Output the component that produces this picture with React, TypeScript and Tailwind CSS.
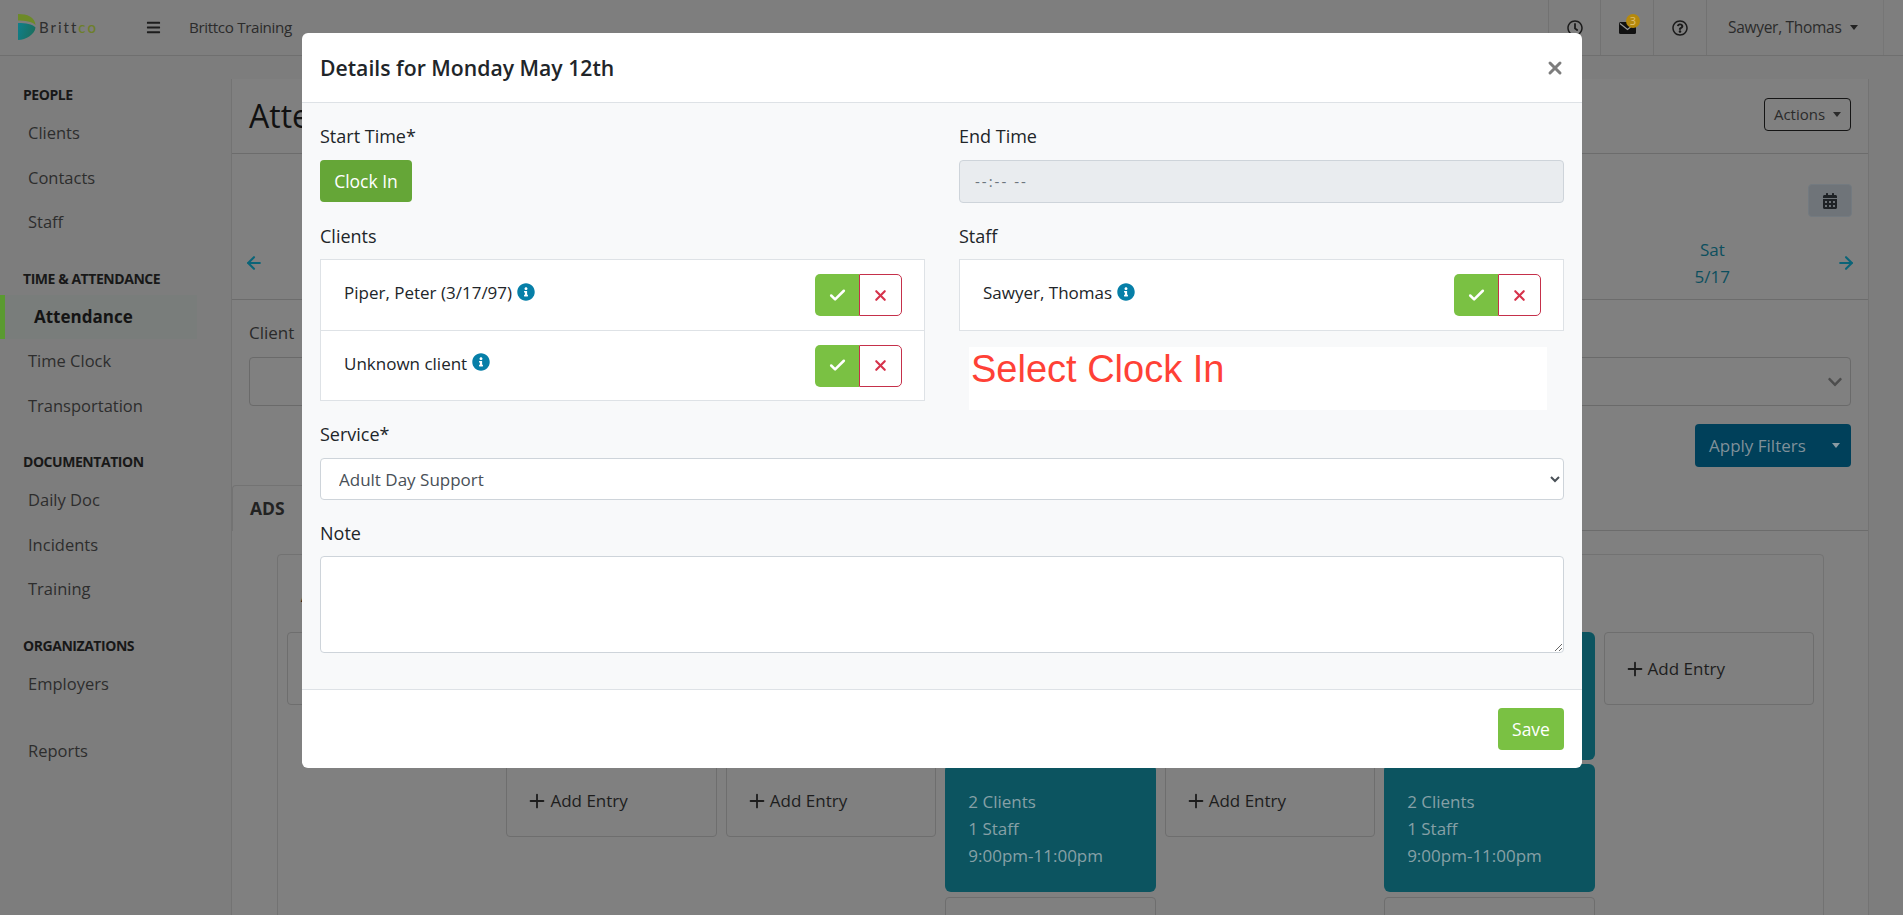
import { ArrowLeft, ArrowRight, Check, Plus, X } from "lucide-react"
import {
  FaBars,
  FaCalendarAlt,
  FaChevronDown,
  FaInfoCircle,
  FaRegClock,
  FaRegQuestionCircle,
} from "react-icons/fa"

const sections = [
  { title: "PEOPLE", items: ["Clients", "Contacts", "Staff"] },
  { title: "TIME & ATTENDANCE", items: ["Attendance", "Time Clock", "Transportation"] },
  { title: "DOCUMENTATION", items: ["Daily Doc", "Incidents", "Training"] },
  { title: "ORGANIZATIONS", items: ["Employers"] },
]

function Logo() {
  return (
    <svg width="18" height="27" viewBox="0 0 18 27" className="shrink-0">
      <defs>
        <linearGradient id="logoTeal" x1="0" y1="0" x2="1" y2="0.3">
          <stop offset="0" stopColor="#0f7f8c" />
          <stop offset="1" stopColor="#1a6f5f" />
        </linearGradient>
      </defs>
      <path d="M0 0C9 0 17 3 17.5 11C14 7.500 7 6.500 0 6.500Z" fill="#6d8a28" />
      <path d="M0 9C8 9 14 10 17.500 13.500C17 20 8 26 0 26Z" fill="url(#logoTeal)" />
    </svg>
  )
}

function Envelope() {
  return (
    <svg width="17" height="12" viewBox="0 0 17 12">
      <rect width="17" height="12" rx="1.500" fill="#111" />
      <path d="M1 1.500L8.500 7.500L16 1.500" fill="none" stroke="#9a9a9a" strokeWidth="1.200" />
    </svg>
  )
}

function AddEntry() {
  return (
    <div className="flex h-[73px] items-center gap-[2px] rounded border border-[#6e6e6e] pl-[19px] text-[#1d1d1d]">
      <Plus className="h-[22px] w-[22px]" strokeWidth={2} />
      <span>Add Entry</span>
    </div>
  )
}

function Visit() {
  return (
    <div className="flex h-[128px] flex-col justify-center rounded-md bg-[#0c5460] pl-[23px] leading-[27px] text-[#86a0a6]">
      <div>2 Clients</div>
      <div>1 Staff</div>
      <div>9:00pm-11:00pm</div>
    </div>
  )
}

function Toggle() {
  return (
    <div className="flex h-[42px] w-[87px] shrink-0">
      <div className="flex w-[44px] items-center justify-center rounded-l-[5px] bg-[#7ac143] text-white">
        <Check className="h-[19px] w-[19px]" strokeWidth={3.2} />
      </div>
      <div className="flex w-[43px] items-center justify-center rounded-r-[5px] border border-[#c5304a] bg-white text-[#d6334c]">
        <X className="h-[17px] w-[17px]" strokeWidth={3} />
      </div>
    </div>
  )
}

function Person({ name, rowClass }: { name: string; rowClass: string }) {
  return (
    <div className={`flex items-center justify-between bg-white pl-[23px] pr-[22px] ${rowClass}`}>
      <div className="-mt-[4px] flex items-center gap-[5px] text-[#212529]">
        <span>{name}</span>
        <FaInfoCircle className="-mt-[3px] h-[18px] w-[18px] text-[#067fa8]" />
      </div>
      <Toggle />
    </div>
  )
}

export default function App() {
  return (
    <div className="relative h-[915px] w-[1903px] overflow-hidden bg-[#7d7d7d] font-['Open_Sans',sans-serif] text-[17px]">
      <header className="flex h-[56px] items-center border-b border-[#6f6f6f] bg-[#7e7e7e] pl-[18px]">
        <Logo />
        <div className="ml-[3px] font-['Lato',sans-serif] text-[15px] tracking-[2px] text-[#2e2e2e]">
          Britt<span className="font-medium text-[#6d7f2a]">co</span>
        </div>
        <FaBars className="ml-[48px] h-[15px] w-[15px] text-[#1d1d1d]" />
        <div className="ml-[28px] text-[15.200px] tracking-[-0.350px] text-[#2b2b2b]">Brittco Training</div>
        <div className="ml-auto mr-[19px] flex h-full border-r border-[#767676]">
          <div className="flex w-[52px] items-center justify-center border-l border-[#727272]">
            <FaRegClock className="h-[16px] w-[16px] text-[#1a1a1a]" />
          </div>
          <div className="relative flex w-[53px] items-center justify-center border-l border-[#727272]">
            <Envelope />
            <span className="absolute left-[25px] top-[14px] flex h-[14px] w-[14px] items-center justify-center rounded-full bg-[#b5890d] text-[11px] text-[#e0c070]">3</span>
          </div>
          <div className="flex w-[53px] items-center justify-center border-l border-[#727272]">
            <FaRegQuestionCircle className="h-[16px] w-[16px] text-[#1a1a1a]" />
          </div>
          <div className="flex w-[177px] items-center gap-[9px] border-l border-[#727272] pl-[21px] text-[15.500px] tracking-[-0.300px] text-[#2b2b2b]">
            <span>Sawyer, Thomas</span>
            <span className="h-0 w-0 border-x-[4px] border-t-[5px] border-x-transparent border-t-[#222]" />
          </div>
        </div>
      </header>

      <div className="flex">
        <aside className="w-[231px] shrink-0 pt-[28px]">
          {sections.map((s) => (
            <div key={s.title} className="mb-[22.500px]">
              <div className="mb-[5px] pl-[23px] text-[14px] font-bold leading-[22px] tracking-[-0.450px] text-[#181818]">{s.title}</div>
              {s.items.map((item) =>
                item === "Attendance" ? (
                  <div key={item} className="flex h-[44.700px] w-[197px] items-center border-l-[5px] border-[#5a9a30] bg-[#797d7b] pl-[29px] text-[17px] font-bold text-[#141414]">
                    {item}
                  </div>
                ) : (
                  <div key={item} className="flex h-[44.700px] items-center pl-[28px] text-[16.500px] text-[#2d2d2d]">{item}</div>
                ),
              )}
            </div>
          ))}
          <div className="flex h-[44px] items-center pl-[28px] text-[16.500px] text-[#2d2d2d]">Reports</div>
        </aside>

        <main className="pt-[23px]">
          <div className="h-[900px] w-[1638px] border-x border-[#737373] bg-[#808080]">
            <div className="flex h-[75px] items-center justify-between border-b border-[#6c6c6c] pl-[17px] pr-[17px]">
              <div className="text-[32px] text-[#111]">Attendance</div>
              <div className="-mt-[4px] flex h-[33px] w-[87px] items-center justify-center gap-[8px] rounded border border-[#151515] text-[15px] text-[#2b2b2b]">
                <span>Actions</span>
                <span className="h-0 w-0 border-x-[4px] border-t-[5px] border-x-transparent border-t-[#2b2b2b]" />
              </div>
            </div>

            <div className="relative h-[146px] border-b border-[#6c6c6c] pl-[12px] pr-[12px] pt-[30px]">
              <div className="flex justify-end pr-[4px]">
                <div className="flex h-[33px] w-[44px] items-center justify-center rounded border border-[#737a80] bg-[#6f7479] text-[#1e2226]">
                  <FaCalendarAlt className="h-[16px] w-[16px]" />
                </div>
              </div>
              <div className="mt-[19px] flex items-center justify-between text-[#0c4f5e]">
                <ArrowLeft className="h-[20px] w-[20px] text-[#0a6478]" strokeWidth={2.5} />
                <div className="ml-auto mr-[106px] text-center leading-[27px]">
                  <div>Sat</div>
                  <div>5/17</div>
                </div>
                <ArrowRight className="h-[20px] w-[20px] text-[#0a6478]" strokeWidth={2.5} />
              </div>
            </div>

            <div className="h-[185px] px-[17px] pt-[22px]">
              <div className="leading-[22px] text-[#2a2a2a]">Client</div>
              <div className="mt-[13px] flex h-[49px] items-center justify-end rounded border border-[#6a6a6a] pr-[7px]">
                <FaChevronDown className="h-[16px] w-[16px] text-[#4d4d4d]" />
              </div>
              <div className="mt-[18px] flex justify-end">
                <div className="flex h-[43px] w-[156px] items-center justify-between rounded bg-[#00405a] pl-[14px] pr-[11px] text-[#7f9099]">
                  <span>Apply Filters</span>
                  <span className="h-0 w-0 border-x-[4.500px] border-t-[5px] border-x-transparent border-t-[#8a9ba3]" />
                </div>
              </div>
            </div>

            <div className="flex h-[46px] border-b border-[#6c6c6c]">
              <div className="flex h-[46px] w-[90px] items-center rounded-tl border-l border-t border-[#737373] bg-[#808080] pl-[17px] text-[17.500px] font-bold text-[#222]">ADS</div>
            </div>

            <div className="ml-[45px] mt-[23px] h-[400px] w-[1547px] rounded-t border border-[#727272] px-[9px]">
              <div className="h-[77px] pl-[14px] pt-[28px] font-bold text-[#111]">ADS</div>
              <div className="grid grid-cols-7 gap-x-[9px]">
                <div><AddEntry /></div>
                <div className="flex flex-col gap-[4px]"><Visit /><AddEntry /></div>
                <div className="flex flex-col gap-[4px]"><Visit /><AddEntry /></div>
                <div className="flex flex-col gap-[4px]"><Visit /><Visit /><div className="mt-[1px]"><AddEntry /></div></div>
                <div className="flex flex-col gap-[4px]"><Visit /><AddEntry /></div>
                <div className="flex flex-col gap-[4px]"><Visit /><Visit /><div className="mt-[1px]"><AddEntry /></div></div>
                <div><AddEntry /></div>
              </div>
            </div>
          </div>
        </main>
      </div>

      <div className="absolute left-[302px] top-[33px] flex h-[735px] w-[1280px] flex-col overflow-hidden rounded-md bg-white text-[#212529]">
        <div className="flex h-[70px] shrink-0 items-center justify-between border-b border-[#dee2e6] pl-[18px] pr-[17px]">
          <h2 className="text-[21.200px] font-semibold">Details for Monday May 12th</h2>
          <X className="h-[20px] w-[20px] text-[#7d7d7d]" strokeWidth={3.6} />
        </div>

        <div className="flex-1 bg-[#f8f9fa] px-[18px] pt-[22px]">
          <div className="grid grid-cols-2 gap-x-[34px]">
            <div>
              <div className="text-[18px] leading-[22px]">Start Time*</div>
              <div className="mt-[13px] flex h-[42px] w-[92px] items-center justify-center rounded bg-[#65a637] text-[17.500px] text-white">Clock In</div>
              <div className="mt-[23px] text-[18px] leading-[22px]">Clients</div>
              <div className="mt-[12px] border border-[#dee2e6]">
                <Person name="Piper, Peter (3/17/97)" rowClass="h-[71px] border-b border-[#dee2e6]" />
                <Person name="Unknown client" rowClass="h-[69px]" />
              </div>
            </div>
            <div>
              <div className="text-[18px] leading-[22px]">End Time</div>
              <div className="mt-[13px] flex h-[43px] items-center rounded border border-[#ced4da] bg-[#e9ecef] pl-[15px] text-[15px] tracking-[2px] text-[#6c757d]">--:-- --</div>
              <div className="mt-[22px] text-[18px] leading-[22px]">Staff</div>
              <div className="mt-[12px] border border-[#dee2e6]">
                <Person name="Sawyer, Thomas" rowClass="h-[70px]" />
              </div>
              <div className="ml-[10px] mt-[16px] h-[63px] w-[578px] bg-white pl-[2px] pt-[1px] font-['Liberation_Sans',sans-serif] text-[38px] leading-[42px] text-[#ff4136]">
                Select Clock In
              </div>
            </div>
          </div>

          <div className="mt-[13px] text-[18px] leading-[22px]">Service*</div>
          <select className="mt-[13px] h-[42px] w-full rounded border border-[#ced4da] bg-white pl-[14px] pr-[6px] text-[#495057]">
            <option>Adult Day Support</option>
          </select>
          <div className="mt-[22px] text-[18px] leading-[22px]">Note</div>
          <textarea className="mt-[12px] block h-[97px] w-full rounded border border-[#ced4da] bg-white" />
        </div>

        <div className="flex h-[79px] shrink-0 items-center justify-end border-t border-[#dee2e6] px-[18px]">
          <div className="flex h-[42px] w-[66px] items-center justify-center rounded bg-[#7ac143] text-[17.500px] text-white">Save</div>
        </div>
      </div>
    </div>
  )
}
